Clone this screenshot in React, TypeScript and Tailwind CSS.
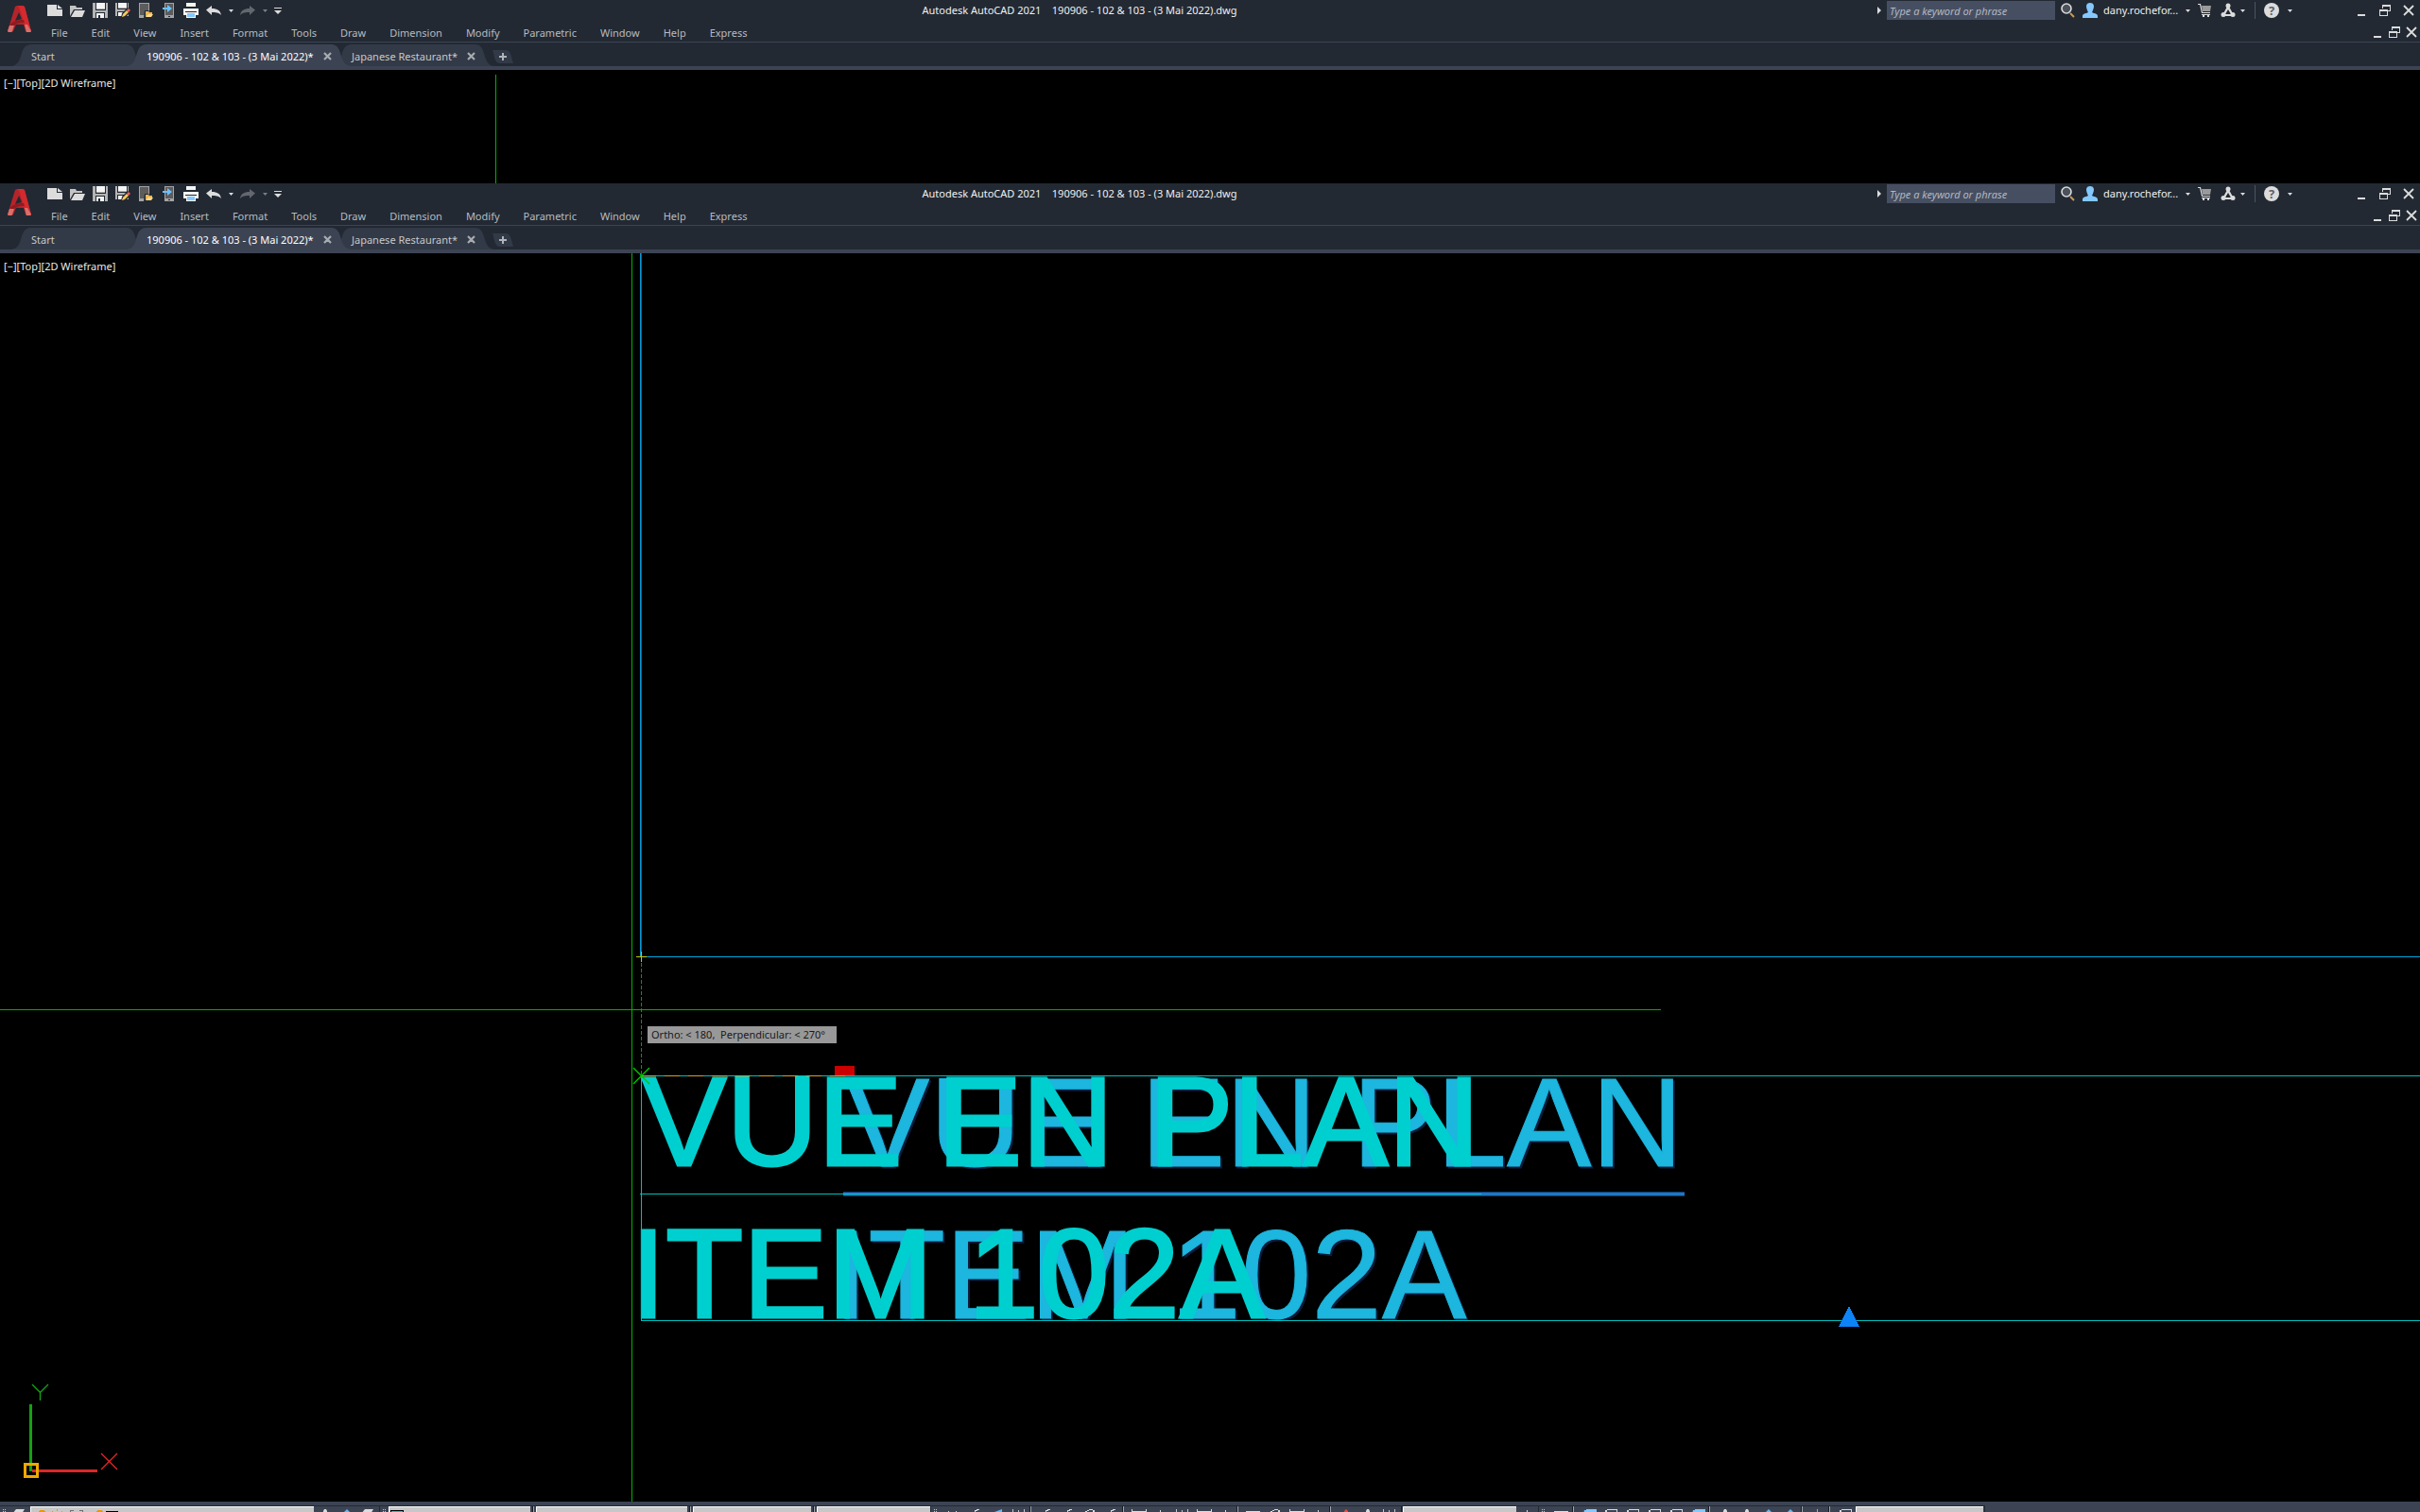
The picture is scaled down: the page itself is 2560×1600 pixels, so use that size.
import React from 'react';

const menus = [
  'File', 'Edit', 'View', 'Insert', 'Format', 'Tools', 'Draw',
  'Dimension', 'Modify', 'Parametric', 'Window', 'Help', 'Express'
];

const quickIcons: { id: string; label: string; art: React.ReactNode }[] = [
  {
    id: 'new',
    label: 'New',
    art: <path d="M0 2h10v5h6v7H0zM11 2l5 4h-5z" fill="#dcdcdc" />
  },
  {
    id: 'open',
    label: 'Open',
    art: (
      <>
        <path d="M0 3h6l1 2h6v2H4L0 14z" fill="#c4c4c4" />
        <path d="M5 8h11l-3 7H1z" fill="#dcdcdc" />
      </>
    )
  },
  {
    id: 'save',
    label: 'Save',
    art: (
      <>
        <path d="M0 0h16v16H0z" fill="#b4b4b4" />
        <path d="M4 0h9v6H4zM4 11h8v5H4z" fill="#f4f4f4" />
        <path d="M3 0h1v7h9V0h1v8H3zM3 10h10v6h-1v-5H4v5H3z" fill="#222933" />
        <path d="M6 13h2v3H6z" fill="#222933" />
      </>
    )
  },
  {
    id: 'saveas',
    label: 'Save As',
    art: (
      <>
        <path d="M0 0h14v14H0z" fill="#b4b4b4" />
        <path d="M3 0h9v5H3zM3 10h6v4H3z" fill="#f4f4f4" />
        <path d="M2 0h1v6h9V0h1v7H2zM2 9h9v1H3v4H2z" fill="#222933" />
        <path d="M6 16l1-5 6-6 4 4-6 6z" fill="#222933" />
        <path d="M7 15l1-3 4-4 2 2-4 4z" fill="#ffc95c" />
        <path d="M12 8l2-2 2 2-2 2z" fill="#f0605c" />
      </>
    )
  },
  {
    id: 'openmobile',
    label: 'Open from Web & Mobile',
    art: (
      <>
        <path d="M1 0h11v16H1z" fill="#a4a4a4" />
        <path d="M2 1h9v12H2z" fill="#5c5c5c" />
        <path d="M7 8h4l1 1h4v7H6z" fill="#222933" />
        <path d="M8 9h3l1 1h3v2h-5l-2 3z" fill="#f0b850" />
        <path d="M10 12h6l-2 3H8z" fill="#ffd98c" />
      </>
    )
  },
  {
    id: 'savemobile',
    label: 'Save to Web & Mobile',
    art: (
      <>
        <path d="M4 0h10v16H4z" fill="#a4a4a4" />
        <path d="M5 1h8v12H5z" fill="#5c5c5c" />
        <path d="M8 14h2v1H8z" fill="#222933" />
        <path d="M2 5h5V2l5 4-5 4V7H2z" fill="#6cc0ff" />
      </>
    )
  },
  {
    id: 'plot',
    label: 'Plot',
    art: (
      <>
        <path d="M3 0h10v4H3zM0 6h16v7H0z" fill="#f4f4f4" />
        <path d="M2 4h12v1H2zM2 9h12v1H2z" fill="#222933" />
        <path d="M3 10h10v6H3z" fill="#f4f4f4" />
        <path d="M4 11h8v4H4z" fill="#84c8ff" />
      </>
    )
  }
];

function Caret({ dim }: { dim?: boolean }) {
  return (
    <svg className="h-[3px] w-[5px]" viewBox="0 0 5 3">
      <path d="M0 0h5L2.5 3z" fill={dim ? '#7c7f85' : '#dcdcdc'} />
    </svg>
  );
}

function Logo() {
  return (
    <svg className="h-7 w-[26px]" viewBox="0 0 26 28">
      <path d="M8 1l2-1h6l2 1 7 26-1 1h-4l-1-1-2-7H9l-3 7-1 1H1l-1-1z" fill="#b5242a" />
      <path d="M11 0h5l2 1 7 26-1 1h-4L13 4z" fill="#d42a2e" />
      <path d="M12 7l-4 9 7-2z" fill="#222933" />
      <path d="M2 20c5-4 9-5 15-5l1 3c-5-1-9 1-12 4z" fill="#8e1b20" />
      <path d="M2 21h5l-2 6-1 1H1l-1-1z" fill="#d8706c" />
      <path d="M18 20h3l4 7-1 1h-4z" fill="#d8706c" />
    </svg>
  );
}

function Arrow({ flip, color }: { flip?: boolean; color: string }) {
  return (
    <svg className="h-2.5 w-4" viewBox="0 0 16 10">
      <path
        d={flip ? 'M16 4.5L10 0v3C4 3 1 5 0 10c3-3 6-3 10-3v3z' : 'M0 4.5L6 0v3c6 0 9 2 10 7-3-3-6-3-10-3v3z'}
        fill={color}
      />
    </svg>
  );
}

function QuickAccess() {
  return (
    <div className="flex items-center">
      {quickIcons.map((icon) => (
        <button key={icon.id} aria-label={icon.label} className="flex h-5 w-6 items-center justify-center">
          <svg className="h-4 w-4" viewBox="0 0 16 16" overflow="visible">
            {icon.art}
          </svg>
        </button>
      ))}
      <button aria-label="Undo" className="flex w-6 justify-center"><Arrow color="#dcdcdc" /></button>
      <button aria-label="Undo list" className="flex w-3 justify-center"><Caret /></button>
      <button aria-label="Redo" className="flex w-6 justify-center"><Arrow flip color="#63676e" /></button>
      <button aria-label="Redo list" className="flex w-3 justify-center"><Caret dim /></button>
      <button aria-label="Customize" className="flex w-4 justify-center">
        <svg className="h-[7px] w-2" viewBox="0 0 8 7">
          <path d="M0 0h8v1H0zM0 3h8L4 7z" fill="#dcdcdc" />
        </svg>
      </button>
    </div>
  );
}

function WindowButtons({ compact }: { compact?: boolean }) {
  const cell = compact ? 'flex h-5 w-[18px] items-center justify-center' : 'flex h-5 w-[25px] items-center justify-center';
  return (
    <div className="flex">
      <button aria-label="Minimize" className={cell}>
        <svg className="h-3 w-3" viewBox="0 0 12 12">
          <path d="M2 10h8v2H2z" fill="#dcdcdc" />
        </svg>
      </button>
      <button aria-label="Restore" className={cell}>
        <svg className="h-3 w-3" viewBox="0 0 12 12">
          <path d="M3 0h9v7H9V6h2V2H4v2H3zM0 5h9v7H0zM1 7v4h7V7z" fill="#dcdcdc" fillRule="evenodd" />
        </svg>
      </button>
      <button aria-label="Close" className={cell}>
        <svg className="h-3 w-3" viewBox="0 0 12 12">
          <path d="M1 1l10 10M11 1L1 11" stroke="#dcdcdc" strokeWidth="1.8" />
        </svg>
      </button>
    </div>
  );
}

function InfoCenter() {
  return (
    <div className="flex items-center text-[#f0f0f0]">
      <button aria-label="Collapse search" className="flex w-3 justify-center">
        <svg className="h-2 w-1" viewBox="0 0 4 8">
          <path d="M0 0l4 4-4 4z" fill="#dcdcdc" />
        </svg>
      </button>
      <input
        aria-label="Search"
        placeholder="Type a keyword or phrase"
        className="ml-0.5 h-5 w-[178px] bg-[#464f62] px-[3px] italic placeholder:text-[#b4b8c0]"
      />
      <button aria-label="Find" className="flex w-[26px] justify-center">
        <svg className="h-4 w-4" viewBox="0 0 16 16" fill="none">
          <circle cx="7" cy="6" r="5" fill="#4c525c" stroke="#dcdcdc" strokeWidth="1.6" />
          <path d="M11 11l4 4" stroke="#c89a5c" strokeWidth="2" />
        </svg>
      </button>
      <button aria-label="Account" className="flex w-[22px] justify-center">
        <svg className="h-4 w-4" viewBox="0 0 16 16" fill="#84c8ff">
          <path d="M4 3.500C4 1 6 0 8 0s4 1 4 3.500S10.500 9 10 10c1 1 6 1 6 4v2H0v-2c0-3 5-3 6-4C5.500 9 4 6 4 3.500z" />
        </svg>
      </button>
      <button className="flex w-[90px] items-center pl-[3px]">dany.rochefor...</button>
      <Caret />
      <button aria-label="App store" className="flex w-[30px] justify-center">
        <svg className="h-4 w-3.5" viewBox="0 0 14 16">
          <path d="M0 1h3l2 9h8v1H4L2 2H0z" fill="#dcdcdc" />
          <path d="M4 3h10l-1 6H5z" fill="#9a9a9a" />
          <path d="M4 12h9v1H4zM5 13h2v2H5zM10 13h2v2h-2z" fill="#dcdcdc" />
        </svg>
      </button>
      <button aria-label="Autodesk" className="flex w-5 justify-center">
        <svg className="h-4 w-4" viewBox="0 0 16 16" fill="#dcdcdc">
          <path d="M7 4h2l5 9-1 1H3l-1-1zM8 7l-3 5h6z" fillRule="evenodd" />
          <circle cx="8" cy="3" r="2.500" />
          <circle cx="3" cy="12.500" r="2.500" />
          <circle cx="13" cy="12.500" r="2.500" />
        </svg>
      </button>
      <button aria-label="Autodesk list" className="flex w-2.5 justify-center"><Caret /></button>
      <span className="ml-2 h-[18px] w-px bg-[#4c5464]" />
      <button aria-label="Help" className="ml-1.5 flex w-[22px] justify-center">
        <span className="flex h-4 w-4 items-center justify-center rounded-full bg-[#dcdcdc] text-[13px] font-bold leading-none text-[#5c6068]">
          ?
        </span>
      </button>
      <button aria-label="Help list" className="flex w-4 justify-center"><Caret /></button>
    </div>
  );
}

interface TabProps {
  label: string;
  active?: boolean;
  closable?: boolean;
  width: string;
}

function FileTab({ label, active, closable, width }: TabProps) {
  const fill = active ? '#3c4454' : '#323947';
  return (
    <div className={active ? 'relative z-10 -ml-5 flex first:ml-0' : '-ml-5 flex first:ml-0'}>
      <svg className="h-[23px] w-5" viewBox="0 0 20 23">
        <path d="M0 23C14 21 7 1 20 0v23z" fill={fill} />
      </svg>
      <div className={`flex items-center justify-between pl-px pt-0.5 ${width} ${active ? 'bg-[#3c4454] text-white' : 'bg-[#323947] text-[#c8c8c8]'}`}>
        <button className="whitespace-pre">{label}</button>
        {closable && (
          <button aria-label={`Close ${label}`}>
            <svg className="h-[9px] w-[9px]" viewBox="0 0 9 9">
              <path d="M1 1l7 7M8 1L1 8" stroke="#a8abb0" strokeWidth="2.2" />
            </svg>
          </button>
        )}
      </div>
      <svg className="h-[23px] w-5" viewBox="0 0 20 23">
        <path d="M20 23C6 21 13 1 0 0v23z" fill={fill} />
      </svg>
    </div>
  );
}

function AppHeader() {
  return (
    <header className="bg-[#222933] text-[11px] leading-4">
      <div className="flex border-b border-[#3c4454]">
        <div className="flex w-[46px] items-start pl-2 pt-1.5">
          <Logo />
        </div>
        <div className="flex-1">
          <div className="flex h-[22px] items-center">
            <QuickAccess />
            <h1 className="flex-1 whitespace-pre text-center text-[#f0f0f0]">
              {'Autodesk AutoCAD 2021    190906 - 102 & 103 - (3 Mai 2022).dwg'}
            </h1>
            <InfoCenter />
            <div className="ml-[55px]">
              <WindowButtons />
            </div>
          </div>
          <div className="flex h-[22px] items-end justify-between">
            <nav className="flex gap-[25px] pb-px pl-2 text-[#b8bbc0]">
              {menus.map((menu) => (
                <button key={menu}>{menu}</button>
              ))}
            </nav>
            <WindowButtons compact />
          </div>
        </div>
      </div>
      <div className="flex h-[25px] items-end pl-3">
        <FileTab label="Start" width="w-[102px]" />
        <FileTab label="190906 - 102 & 103 - (3 Mai 2022)*" active closable width="w-[197px]" />
        <FileTab label="Japanese Restaurant*" closable width="w-[132px]" />
        <button aria-label="New tab" className="-ml-0.5 mb-[3px]">
          <svg className="h-3.5 w-[22px]" viewBox="0 0 22 14">
            <path d="M0 0h15c5 1 5 8 7 14H7C2 13 2 6 0 0z" fill="#323947" />
            <path d="M10 3h2v3h3v2h-3v3h-2V8H7V6h3z" fill="#b0b3b8" />
          </svg>
        </button>
      </div>
      <div className="h-1 bg-[#3c4454]" />
    </header>
  );
}

function ViewLabel() {
  return (
    <div className="relative px-1 pt-1.5 text-[11px] leading-4 text-[#e8e8e8]">[−][Top][2D Wireframe]</div>
  );
}

function Drawing() {
  return (
    <svg className="absolute inset-0 h-full w-full" shapeRendering="crispEdges">
      {/* selected frame */}
      <path d="M677.500 0V744" stroke="#009ad8" />
      <path d="M678.500 0V744" stroke="#38515c" />
      <line x1="678" y1="744.500" x2="100%" y2="744.500" stroke="#00a4e4" />

      {/* title block text being dragged, then its preview */}
      <g fontFamily="Liberation Sans, Arial, sans-serif" fontSize="134" shapeRendering="auto">
        <g fill="#0d1c3c" stroke="#0d1c3c">
          <text x="896" y="968">VUE EN PLAN</text>
          <text x="883" y="1129">ITEM 102A</text>
        </g>
        <g fill="#1cb6de" stroke="#1cb6de">
          <text x="894" y="966">VUE EN PLAN</text>
          <text x="881" y="1127">ITEM 102A</text>
        </g>
        <g fill="#00cfcf" stroke="#00cfcf" strokeWidth="3">
          <text x="679" y="965">VUE EN PLAN</text>
          <text x="667" y="1126">ITEM 102A</text>
        </g>
      </g>

      {/* underline */}
      <rect x="892" y="993" width="890" height="5" fill="#123a70" />
      <rect x="892" y="994" width="890" height="3" fill="#1c78c4" />
      <rect x="677" y="995" width="890" height="1" fill="#00bfbf" />

      {/* block bounds */}
      <line x1="678" y1="870.500" x2="100%" y2="870.500" stroke="#00bfbf" />
      <line x1="678" y1="1129.500" x2="100%" y2="1129.500" stroke="#00bfbf" />
      <path d="M678.500 870V1130" stroke="#00bfbf" />
      <path d="M678 870.500H894" stroke="#d8a020" strokeDasharray="16 9" />
      <rect x="883" y="860" width="21" height="10" fill="#cc0000" />
      <path d="M1956 1114l11 22h-22z" fill="#0c84f8" />

      {/* tracking vectors */}
      <path d="M678.500 745V870" stroke="#00a000" strokeDasharray="4 2" />
      <path d="M673 744.500h11M678.500 739v11" stroke="#c8c800" />
      <path d="M670 862l17 17M687 862l-17 17" stroke="#00c800" strokeWidth="1.4" shapeRendering="auto" />

      {/* crosshair */}
      <path d="M668.500 0V1321M0 800.500H1757" stroke="#00b400" />

      {/* UCS icon */}
      <path d="M31 1218h3v71h-3z" fill="#14a014" />
      <path d="M34 1287h69v3H34z" fill="#dc2828" />
      <rect x="26.500" y="1281.500" width="13" height="13" fill="none" stroke="#f0a800" strokeWidth="3" />
      <g fill="none" strokeWidth="1.4" shapeRendering="auto">
        <path d="M34 1197l8.500 8.500L51 1197M42.500 1205v9" stroke="#14a014" />
        <path d="M107 1270l17 17M124 1270l-17 17" stroke="#dc2828" />
      </g>
    </svg>
  );
}

const glyphs = {
  layer: { d: 'M8 3h9l-3 5H4z', color: '#dcdcdc' },
  tip: { d: 'M11 3h2l1 2v3h-4V5z', color: '#dcdcdc' },
  blueTip: { d: 'M10 5l2-2 3 3v2H9V6z', color: '#6cb8f0' },
  redTip: { d: 'M10 5l2-2 2 2v3h-4z', color: '#f04840' },
  dots: { d: 'M6 5h1v3H6zM14 5h1v3h-1z', color: '#dcdcdc' },
  slash: { d: 'M12 5h2V4h2V3h-3v1h-2v4h1z', color: '#dcdcdc' },
  blueTri: { d: 'M17 3v5H9V6z', color: '#6cb8f0' },
  bars: { d: 'M5 3h1v5H5zM11 4h1v4h-1zM17 3h1v5h-1z', color: '#c4c8d0' },
  arc: { d: 'M7 8V5h2V4h2V3h4v1h2v2h1v2h-1V6h-2V4h-4v1H9v3z', color: '#dcdcdc' },
  dim: { d: 'M4 3h1v2h14V3h1v5h-1V6H5v2H4z', color: '#dcdcdc' },
  dash: { d: 'M4 5h15v2H4z', color: '#dcdcdc' },
  box: { d: 'M6 4h2V3h11v5h-1V4H8v2H6z', color: '#dcdcdc' },
  solid: { d: 'M7 4h2V3h11v5H6z', color: '#84c8ff' },
  dot: { d: 'M11 4h1v4h-1z', color: '#dcdcdc' },
  sun: { d: 'M11 3h1v5h-1zM6 6h1v1H6zM16 6h1v1h-1z', color: '#e8a83c' }
};

type Glyph = keyof typeof glyphs;

function ToolButton({ glyph }: { glyph: Glyph }) {
  return (
    <button aria-label={glyph} className="shrink-0">
      <svg className="h-4 w-[23px]" viewBox="0 0 23 16">
        <path d={glyphs[glyph].d} fill={glyphs[glyph].color} />
      </svg>
    </button>
  );
}

function ToolGroup({ items }: { items: Glyph[] }) {
  return (
    <div className="flex shrink-0 border-l border-[#171c24] pl-[5px] shadow-[inset_1px_0_0_#a0a4ac]">
      {items.map((glyph, i) => (
        <ToolButton key={i} glyph={glyph} />
      ))}
    </div>
  );
}

function Grip({ wide }: { wide?: boolean }) {
  return (
    <svg
      className={wide ? 'mr-[3px] h-4 w-[9px] shrink-0' : 'h-4 w-[9px] shrink-0'}
      viewBox="0 0 9 16"
      fill="#c4c8d0"
    >
      <path d="M3 3h1v1H3zM5 3h1v1H5zM3 5h1v1H3zM5 5h1v1H5z" />
    </svg>
  );
}

function Combo({ label, width, children }: { label: string; width: string; children?: React.ReactNode }) {
  return (
    <div className={`relative h-4 shrink-0 ${width}`}>
      <select aria-label={label} className="h-4 w-full appearance-none border-l border-t border-white bg-[#c8c8c8]" />
      {children}
    </div>
  );
}

function BottomToolbars() {
  return (
    <footer className="h-[11px] shrink-0 overflow-hidden bg-[#3c4454] pt-1">
      <div className="flex w-[2100px] items-start border-r border-t border-[#222933]">
        <Grip />
        <ToolButton glyph="layer" />
        <Combo label="Layer" width="w-[300px]">
          <svg className="absolute left-0 top-0 h-4 w-24" viewBox="0 0 96 16">
            <path d="M9 5h1V4h5v1h1v3H9zM28 3h1v2h-1zM23 5h1v1h-1zM33 5h1v1h-1zM70 5h1V4h5v1h1v3h-2V6h-3v2h-2z" fill="#e8980c" />
            <path d="M42 4h4v1h-3v3h-1zM52 4h4v4h-1V5h-3zM45 6h8v2h-8z" fill="#707070" />
            <path d="M80 5h13v4H80z" fill="#000" />
          </svg>
        </Combo>
        <ToolButton glyph="tip" />
        <ToolButton glyph="blueTip" />
        <ToolButton glyph="layer" />
        <span className="h-4 w-px bg-[#222933]" />
        <Grip />
        <Combo label="Color" width="w-[150px]">
          <span className="absolute left-0.5 top-1 h-3 w-3.5 border border-black bg-[#28c0c0]" />
        </Combo>
        <span className="mx-[2px] h-4 w-0.5 border-l border-[#171c24] bg-[#a0a4ac]" />
        <Combo label="Linetype" width="w-[160px]" />
        <span className="mx-[2px] h-4 w-0.5 border-l border-[#171c24] bg-[#a0a4ac]" />
        <Combo label="Lineweight" width="w-[125px]" />
        <span className="mx-[2px] h-4 w-0.5 border-l border-[#171c24] bg-[#a0a4ac]" />
        <Combo label="Plot style" width="w-[120px]" />
        <span className="h-4 w-px bg-[#222933]" />
        <Grip wide />
        <ToolButton glyph="dots" />
        <ToolButton glyph="slash" />
        <ToolButton glyph="blueTri" />
        <ToolButton glyph="bars" />
        <ToolGroup items={['slash', 'slash', 'arc', 'slash']} />
        <ToolGroup items={['dim', 'dot', 'bars', 'dim', 'dot']} />
        <ToolGroup items={['dash', 'arc', 'dim', 'dot']} />
        <ToolGroup items={['redTip', 'tip', 'bars']} />
        <span className="mx-px h-4 w-px bg-[#171c24]" />
        <Combo label="Dimension style" width="w-[120px]" />
        <ToolButton glyph="dot" />
        <span className="h-4 w-px bg-[#222933]" />
        <Grip wide />
        <ToolButton glyph="dash" />
        <ToolGroup items={['solid', 'box', 'box', 'box', 'box', 'solid']} />
        <ToolGroup items={['tip', 'tip', 'blueTip', 'blueTip']} />
        <ToolGroup items={['sun']} />
        <ToolGroup items={['box']} />
        <Combo label="View" width="w-[135px]" />
      </div>
    </footer>
  );
}

export default function App() {
  return (
    <div className="flex h-screen flex-col overflow-hidden bg-black font-['Noto_Sans',sans-serif]">
      <AppHeader />
      <section className="relative h-[120px] shrink-0">
        <svg className="absolute inset-0 h-full w-full" shapeRendering="crispEdges">
          <path d="M524.500 5V120" stroke="#00b400" />
        </svg>
        <ViewLabel />
      </section>

      <AppHeader />
      <main className="relative min-h-0 flex-1 overflow-hidden">
        <Drawing />
        <ViewLabel />
        <div className="absolute left-[685px] top-[818px] h-[18px] w-[200px] whitespace-pre bg-[#989898] px-1 text-[11px] leading-[18px] text-[#181818]">
          {'Ortho: < 180,  Perpendicular: < 270°'}
        </div>
      </main>
      <BottomToolbars />
    </div>
  );
}
